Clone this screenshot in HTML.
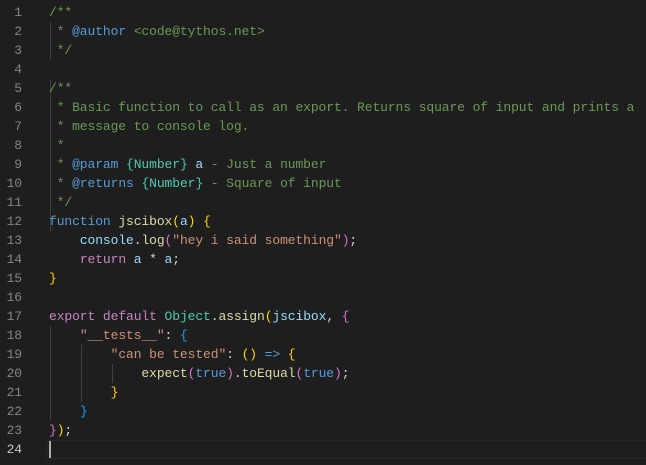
<!DOCTYPE html>
<html><head><style>
html,body{margin:0;padding:0;background:#1e1e1e;width:646px;height:465px;overflow:hidden}
.ed{position:relative;font-family:"Liberation Mono",monospace;font-size:13px;letter-spacing:-0.1px}
.l{position:absolute;left:0;height:19px;line-height:19px;white-space:pre;width:646px}
.n{position:absolute;left:0;width:22px;text-align:right;color:#858585}
.c{position:absolute;left:49px;color:#d4d4d4}
.cm{color:#6a9955}.tg{color:#569cd6}.ty{color:#4ec9b0}.v{color:#9cdcfe}.k{color:#569cd6}
.kc{color:#c586c0}.f{color:#dcdcaa}.s{color:#ce9178}
.b1{color:#ffd700}.b2{color:#da70d6}.b3{color:#179fff}
.g{position:absolute;width:1px;background:#404040}
</style></head><body><div class="ed">
<div class="g" style="left:50px;top:22px;height:38px"></div>
<div class="g" style="left:50px;top:79px;height:152px"></div>
<div class="g" style="left:50px;top:326px;height:95px"></div>
<div class="g" style="left:81px;top:345px;height:57px"></div>
<div class="g" style="left:112px;top:364px;height:19px"></div>
<div style="position:absolute;left:46px;top:440px;width:600px;height:17px;border:1px solid #282828;border-right:none"></div>
<div style="position:absolute;left:49px;top:441px;width:2px;height:17px;background:#aeafad"></div>
<div class="l" style="top:3px"><span class="n">1</span><span class="c cm">/**</span></div>
<div class="l" style="top:22px"><span class="n">2</span><span class="c cm"> * <span class="tg">@author</span> &lt;code@tythos.net&gt;</span></div>
<div class="l" style="top:41px"><span class="n">3</span><span class="c cm"> */</span></div>
<div class="l" style="top:60px"><span class="n">4</span></div>
<div class="l" style="top:79px"><span class="n">5</span><span class="c cm">/**</span></div>
<div class="l" style="top:98px"><span class="n">6</span><span class="c cm"> * Basic function to call as an export. Returns square of input and prints a</span></div>
<div class="l" style="top:117px"><span class="n">7</span><span class="c cm"> * message to console log.</span></div>
<div class="l" style="top:136px"><span class="n">8</span><span class="c cm"> *</span></div>
<div class="l" style="top:155px"><span class="n">9</span><span class="c cm"> * <span class="tg">@param</span> <span class="ty">{Number}</span> <span class="v">a</span> - Just a number</span></div>
<div class="l" style="top:174px"><span class="n">10</span><span class="c cm"> * <span class="tg">@returns</span> <span class="ty">{Number}</span> - Square of input</span></div>
<div class="l" style="top:193px"><span class="n">11</span><span class="c cm"> */</span></div>
<div class="l" style="top:212px"><span class="n">12</span><span class="c"><span class="k">function</span> <span class="f">jscibox</span><span class="b1">(</span><span class="v">a</span><span class="b1">)</span> <span class="b1">{</span></span></div>
<div class="l" style="top:231px"><span class="n">13</span><span class="c">    <span class="v">console</span>.<span class="f">log</span><span class="b2">(</span><span class="s">"hey i said something"</span><span class="b2">)</span>;</span></div>
<div class="l" style="top:250px"><span class="n">14</span><span class="c">    <span class="kc">return</span> <span class="v">a</span> * <span class="v">a</span>;</span></div>
<div class="l" style="top:269px"><span class="n">15</span><span class="c"><span class="b1">}</span></span></div>
<div class="l" style="top:288px"><span class="n">16</span></div>
<div class="l" style="top:307px"><span class="n">17</span><span class="c"><span class="kc">export</span> <span class="kc">default</span> <span class="ty">Object</span>.<span class="f">assign</span><span class="b1">(</span><span class="v">jscibox</span>, <span class="b2">{</span></span></div>
<div class="l" style="top:326px"><span class="n">18</span><span class="c">    <span class="s">"__tests__"</span>: <span class="b3">{</span></span></div>
<div class="l" style="top:345px"><span class="n">19</span><span class="c">        <span class="s">"can be tested"</span>: <span class="b1">()</span> <span class="k">=&gt;</span> <span class="b1">{</span></span></div>
<div class="l" style="top:364px"><span class="n">20</span><span class="c">            <span class="f">expect</span><span class="b2">(</span><span class="k">true</span><span class="b2">)</span>.<span class="f">toEqual</span><span class="b2">(</span><span class="k">true</span><span class="b2">)</span>;</span></div>
<div class="l" style="top:383px"><span class="n">21</span><span class="c">        <span class="b1">}</span></span></div>
<div class="l" style="top:402px"><span class="n">22</span><span class="c">    <span class="b3">}</span></span></div>
<div class="l" style="top:421px"><span class="n">23</span><span class="c"><span class="b2">}</span><span class="b1">)</span>;</span></div>
<div class="l" style="top:440px"><span class="n" style="color:#c6c6c6">24</span></div>
</div></body></html>
